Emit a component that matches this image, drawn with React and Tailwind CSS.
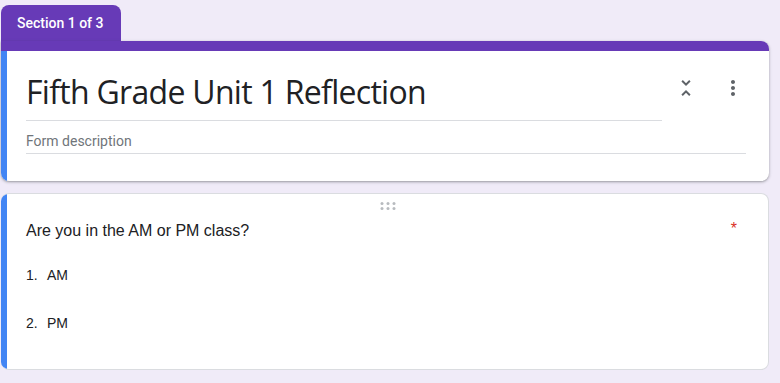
import React from "react";

function UnfoldLess() {
  return (
    <svg width="24" height="24" viewBox="0 0 24 24" fill="#5f6368">
      <path d="M7.41 18.59L8.82 20 12 16.83 15.17 20l1.41-1.41L12 14l-4.59 4.59zm9.18-13.18L15.17 4 12 7.17 8.83 4 7.41 5.41 12 10l4.59-4.59z" />
    </svg>
  );
}

function MoreVert() {
  return (
    <svg width="24" height="24" viewBox="0 0 24 24" fill="#5f6368">
      <path d="M12 8c1.1 0 2-.9 2-2s-.9-2-2-2-2 .9-2 2 .9 2 2 2zm0 2c-1.1 0-2 .9-2 2s.9 2 2 2 2-.9 2-2-.9-2-2-2zm0 6c-1.1 0-2 .9-2 2s.9 2 2 2 2-.9 2-2-.9-2-2-2z" />
    </svg>
  );
}

function DragDots() {
  return (
    <svg width="16" height="8" viewBox="0 0 16 8" fill="#b8bbbf">
      <circle cx="2" cy="1.5" r="1.5" />
      <circle cx="8" cy="1.5" r="1.5" />
      <circle cx="14" cy="1.5" r="1.5" />
      <circle cx="2" cy="6.5" r="1.5" />
      <circle cx="8" cy="6.5" r="1.5" />
      <circle cx="14" cy="6.5" r="1.5" />
    </svg>
  );
}

export default function App() {
  return (
    <div className="w-[780px] h-[383px] bg-[#f0ebf8] pt-[5px] pl-[1px] overflow-hidden">
      {/* Tab */}
      <div className="w-[120px] h-[36px] bg-[#673ab7] rounded-t-lg pl-[16px] pt-[8px] text-white text-[14px] leading-[20px] font-medium [font-family:Roboto,'Liberation_Sans',sans-serif]">
        Section 1 of 3
      </div>

      {/* Card 1 */}
      <div className="w-[768px] bg-white rounded-b-lg rounded-tr-lg overflow-hidden shadow-[0_1px_2px_0_rgba(60,64,67,0.35),0_1px_3px_1px_rgba(60,64,67,0.12)]">
        <div className="h-[10px] bg-[#673ab7]" />
        <div className="flex">
          <div className="w-[6px] bg-[#4285f4] shrink-0" />
          <div className="pl-[19px] flex-1">
            <div className="flex">
              <div className="w-[636px] pt-[21px] pb-[8px] border-b border-[#dadce0]">
                <div className="text-[32px] leading-[40px] tracking-[-0.7px] text-[#202124] [font-family:'Open_Sans',sans-serif]">
                  Fifth Grade Unit 1 Reflection
                </div>
              </div>
              <div className="ml-[12px] mt-[25px]">
                <UnfoldLess />
              </div>
              <div className="ml-[23px] mt-[25px]">
                <MoreVert />
              </div>
            </div>
            <div className="w-[720px] mt-[10px] pb-[2px] border-b border-[#dadce0] text-[14px] leading-[20px] text-[#70757a] [font-family:Roboto,sans-serif]">
              Form description
            </div>
            <div className="h-[27px]" />
          </div>
        </div>
      </div>

      {/* Card 2 */}
      <div className="mt-[12px] w-[768px] h-[177px] bg-white rounded-lg border border-[#dadce0] border-l-0 overflow-hidden flex">
        <div className="w-[6px] bg-[#4285f4] shrink-0" />
        <div className="flex-1 pl-[19px] pr-[31px]">
          <div className="flex justify-center pt-[8px] h-[16px] -ml-[19px] -mr-[31px]">
            <DragDots />
          </div>
          <div className="mt-[9px] flex justify-between items-start text-[16px] leading-[24px] text-[#202124] [font-family:'Liberation_Sans',Arial,sans-serif]">
            <span>Are you in the AM or PM class?</span>
            <span className="text-[#d93025] -mt-[2px]">*</span>
          </div>
          <div className="mt-[22px] flex text-[14px] leading-[20px] text-[#202124] [font-family:'Liberation_Sans',Arial,sans-serif]">
            <span className="w-[21px]">1.</span>
            <span>AM</span>
          </div>
          <div className="mt-[28px] flex text-[14px] leading-[20px] text-[#202124] [font-family:'Liberation_Sans',Arial,sans-serif]">
            <span className="w-[21px]">2.</span>
            <span>PM</span>
          </div>
        </div>
      </div>
    </div>
  );
}
